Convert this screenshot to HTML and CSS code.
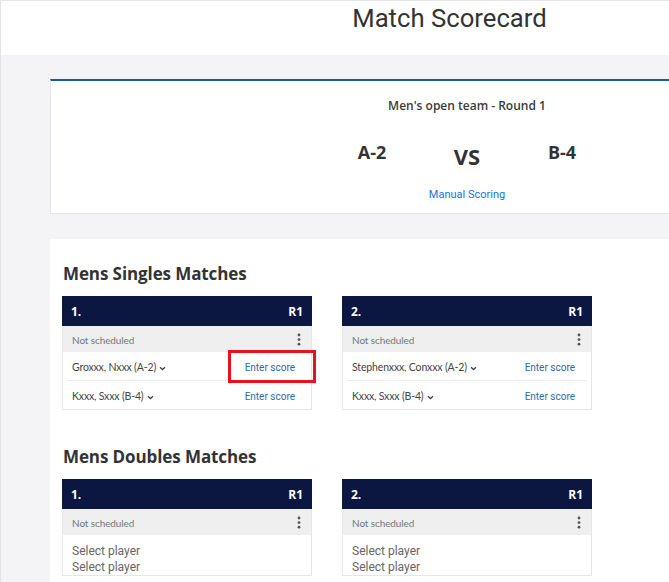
FILE: index.html
```html
<!DOCTYPE html>
<html lang="en">
<head>
<meta charset="utf-8">
<title>Match Scorecard</title>
<link rel="stylesheet" href="styles.css">
</head>
<body>
<div class="app">
  <header class="topbar">
    <h1 class="page-title">Match Scorecard</h1>
  </header>
  <main class="content">
    <section class="summary">
      <div class="summary-title">Men's open team - Round 1</div>
      <div class="teams">
        <span class="team">A-2</span>
        <span class="vs">VS</span>
        <span class="team">B-4</span>
      </div>
      <a class="manual-link">Manual Scoring</a>
    </section>

    <section class="matches">
      <h2 class="section-title">Mens Singles Matches</h2>
      <div class="card-grid">
        <div class="match-card">
          <div class="card-head"><span>1.</span><span>R1</span></div>
          <div class="card-status"><span>Not scheduled</span>
            <svg class="kebab" width="4" height="14" viewBox="0 0 4 14"><circle cx="2" cy="2" r="1.4"/><circle cx="2" cy="6.6" r="1.4"/><circle cx="2" cy="11.2" r="1.4"/></svg>
          </div>
          <div class="player-row">
            <span class="player">Groxxx, Nxxx (A-2)<svg class="chev" width="7" height="5" viewBox="0 0 7 5"><path d="M1 1.2l2.5 2.3L6 1.2"/></svg></span>
            <a class="score-link">Enter score</a>
            <span class="highlight"></span>
          </div>
          <div class="player-row">
            <span class="player">Kxxx, Sxxx (B-4)<svg class="chev" width="7" height="5" viewBox="0 0 7 5"><path d="M1 1.2l2.5 2.3L6 1.2"/></svg></span>
            <a class="score-link">Enter score</a>
          </div>
        </div>
        <div class="match-card">
          <div class="card-head"><span>2.</span><span>R1</span></div>
          <div class="card-status"><span>Not scheduled</span>
            <svg class="kebab" width="4" height="14" viewBox="0 0 4 14"><circle cx="2" cy="2" r="1.4"/><circle cx="2" cy="6.6" r="1.4"/><circle cx="2" cy="11.2" r="1.4"/></svg>
          </div>
          <div class="player-row">
            <span class="player">Stephenxxx, Conxxx (A-2)<svg class="chev" width="7" height="5" viewBox="0 0 7 5"><path d="M1 1.2l2.5 2.3L6 1.2"/></svg></span>
            <a class="score-link">Enter score</a>
          </div>
          <div class="player-row">
            <span class="player">Kxxx, Sxxx (B-4)<svg class="chev" width="7" height="5" viewBox="0 0 7 5"><path d="M1 1.2l2.5 2.3L6 1.2"/></svg></span>
            <a class="score-link">Enter score</a>
          </div>
        </div>
      </div>

      <h2 class="section-title">Mens Doubles Matches</h2>
      <div class="card-grid">
        <div class="match-card">
          <div class="card-head"><span>1.</span><span>R1</span></div>
          <div class="card-status"><span>Not scheduled</span>
            <svg class="kebab" width="4" height="14" viewBox="0 0 4 14"><circle cx="2" cy="2" r="1.4"/><circle cx="2" cy="6.6" r="1.4"/><circle cx="2" cy="11.2" r="1.4"/></svg>
          </div>
          <div class="select-block">
            <div>Select player</div>
            <div>Select player</div>
          </div>
        </div>
        <div class="match-card">
          <div class="card-head"><span>2.</span><span>R1</span></div>
          <div class="card-status"><span>Not scheduled</span>
            <svg class="kebab" width="4" height="14" viewBox="0 0 4 14"><circle cx="2" cy="2" r="1.4"/><circle cx="2" cy="6.6" r="1.4"/><circle cx="2" cy="11.2" r="1.4"/></svg>
          </div>
          <div class="select-block">
            <div>Select player</div>
            <div>Select player</div>
          </div>
        </div>
      </div>
    </section>
  </main>
</div>
</body>
</html>
```

FILE: styles.css
```css
html, body {
  margin: 0;
  padding: 0;
  overflow: hidden;
  background: #f4f4f6;
}

.app {
  width: 898px;
  min-height: 582px;
  border-left: 1px solid #e3e3e6;
  box-sizing: border-box;
  font-family: "Open Sans", "Noto Sans", sans-serif;
  color: #333;
}

.topbar {
  height: 55px;
  background: #fff;
  border-top: 1px solid #e6e6e8;
  box-sizing: border-box;
  text-align: center;
}

.page-title {
  margin: 0;
  padding-top: 1px;
  font-family: Roboto, "Liberation Sans", sans-serif;
  font-weight: 400;
  font-size: 25.7px;
  line-height: 32px;
  color: #333;
}

.content {
  padding: 24px 0 0 49px;
}

.summary {
  width: 834px;
  background: #fff;
  border: 1px solid #e4e4e6;
  border-top: 2px solid #1c5c9c;
  box-sizing: border-box;
  padding: 17px 0 11px;
  display: flex;
  flex-direction: column;
  align-items: center;
}

.summary-title {
  font-size: 12px;
  font-weight: 600;
  line-height: 16px;
  color: #3a3a3a;
}

.teams {
  display: flex;
  margin-top: 26px;
}

.team {
  width: 95px;
  text-align: center;
  font-size: 18px;
  font-weight: 700;
  line-height: 24px;
  color: #333;
}

.vs {
  width: 95px;
  text-align: center;
  font-size: 22px;
  font-weight: 700;
  line-height: 24px;
  padding-top: 4px;
  color: #333;
}

.manual-link {
  margin-top: 20px;
  font-family: Roboto, "Liberation Sans", sans-serif;
  font-size: 11px;
  line-height: 14px;
  color: #1a73e8;
}

.matches {
  width: 834px;
  margin-top: 25px;
  background: #fff;
  padding: 23px 0 0 12px;
  box-sizing: border-box;
  min-height: 400px;
}

.section-title {
  margin: 0 0 10px 1px;
  font-size: 17px;
  font-weight: 700;
  line-height: 24px;
  color: #333;
  letter-spacing: -0.1px;
}

.card-grid {
  display: flex;
  gap: 30px;
  margin-bottom: 35px;
}

.match-card {
  width: 250px;
  border: 1px solid #e6e6e8;
  border-top: none;
  box-sizing: border-box;
  background: #fff;
  font-family: Lato, "Open Sans", sans-serif;
}

.card-head {
  height: 30px;
  margin: 0 -1px;
  background: #0b1741;
  color: #fff;
  display: flex;
  justify-content: space-between;
  align-items: center;
  padding: 0 9px 0 9px;
  font-family: "Open Sans", sans-serif;
  font-size: 12px;
  font-weight: 700;
}

.card-status {
  height: 26px;
  background: #efeff0;
  display: flex;
  justify-content: space-between;
  align-items: center;
  padding: 1px 10px 0 9px;
  box-sizing: border-box;
  font-size: 10px;
  letter-spacing: -0.1px;
  color: #777;
}

.kebab {
  fill: #555;
}

.player-row {
  position: relative;
  height: 29px;
  display: flex;
  justify-content: space-between;
  align-items: center;
  margin: 0 4px;
  padding: 2px 12px 0 5px;
  box-sizing: border-box;
  border-bottom: 1px solid #ececee;
}

.player-row + .player-row {
  border-bottom: none;
  height: 28px;
}

.player {
  display: flex;
  align-items: center;
  gap: 3px;
  font-size: 10.5px;
  letter-spacing: -0.15px;
  color: #444;
}

.chev {
  fill: none;
  stroke: #444;
  stroke-width: 1.3;
  margin-top: 3px;
}

.score-link {
  font-family: Roboto, "Liberation Sans", sans-serif;
  font-size: 10px;
  color: #2c6aa8;
}

.highlight {
  position: absolute;
  right: -9px;
  top: -2px;
  width: 88px;
  height: 33px;
  border: 3px solid #e8121a;
  box-sizing: border-box;
}

.select-block {
  padding: 8px 9px 0;
  font-family: Roboto, "Liberation Sans", sans-serif;
  font-size: 12px;
  line-height: 16px;
  color: #666;
}
```
